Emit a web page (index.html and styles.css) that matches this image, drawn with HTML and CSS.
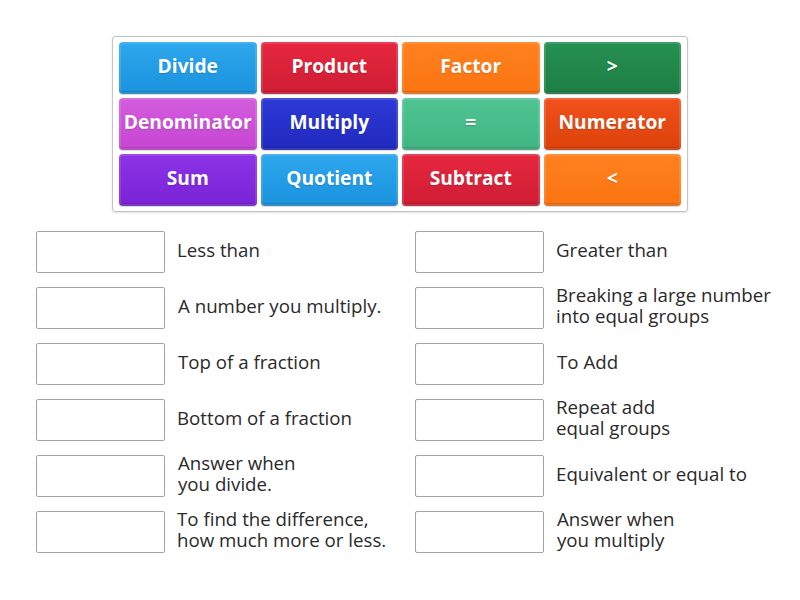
FILE: index.html
```html
<!DOCTYPE html>
<html>
<head>
<meta charset="utf-8">
<link rel="stylesheet" href="styles.css">
</head>
<body>
<div class="page">
  <div class="bank">
    <div class="tile c-blue">Divide</div>
    <div class="tile c-red">Product</div>
    <div class="tile c-orange">Factor</div>
    <div class="tile c-green">&gt;</div>
    <div class="tile c-pink">Denominator</div>
    <div class="tile c-navy">Multiply</div>
    <div class="tile c-mint">=</div>
    <div class="tile c-vermil">Numerator</div>
    <div class="tile c-purple">Sum</div>
    <div class="tile c-blue">Quotient</div>
    <div class="tile c-red">Subtract</div>
    <div class="tile c-orange">&lt;</div>
  </div>
  <div class="pairs">
    <div class="pair"><div class="slot"></div><div class="label">Less than</div></div>
    <div class="pair"><div class="slot"></div><div class="label">Greater than</div></div>
    <div class="pair"><div class="slot"></div><div class="label shift">A number you multiply.</div></div>
    <div class="pair"><div class="slot"></div><div class="label">Breaking a large number<br>into equal groups</div></div>
    <div class="pair"><div class="slot"></div><div class="label shift">Top of a fraction</div></div>
    <div class="pair"><div class="slot"></div><div class="label shift">To Add</div></div>
    <div class="pair"><div class="slot"></div><div class="label">Bottom of a fraction</div></div>
    <div class="pair"><div class="slot"></div><div class="label">Repeat add<br>equal groups</div></div>
    <div class="pair"><div class="slot"></div><div class="label shift">Answer when<br>you divide.</div></div>
    <div class="pair"><div class="slot"></div><div class="label">Equivalent or equal to</div></div>
    <div class="pair"><div class="slot"></div><div class="label">To find the difference,<br>how much more or less.</div></div>
    <div class="pair"><div class="slot"></div><div class="label shift">Answer when<br>you multiply</div></div>
  </div>
</div>
</body>
</html>
```

FILE: styles.css
```css
html, body {
  margin: 0;
  padding: 0;
  background: #ffffff;
}
body {
  font-family: "Open Sans", "Liberation Sans", sans-serif;
  width: 800px;
  height: 600px;
  overflow: hidden;
}
.page {
  padding-top: 36px;
}
.bank {
  width: 562px;
  margin: 0 auto;
  border: 1px solid #c4c4c4;
  border-radius: 3px;
  padding: 5px 6px 5px 6px;
  display: grid;
  grid-template-columns: repeat(4, 137.5px);
  grid-auto-rows: 52px;
  gap: 4px;
  box-shadow: 0 1px 2px rgba(0,0,0,0.12);
}
.tile {
  border-radius: 4px;
  color: #ffffff;
  font-weight: 700;
  font-size: 19.2px;
  display: flex;
  align-items: center;
  justify-content: center;
  padding-bottom: 6px;
  box-sizing: border-box;
  white-space: nowrap;
  text-shadow: 0 1px 1px rgba(0,0,0,0.15);
  box-shadow: inset 0 0 0 2px rgba(255,255,255,0.12), inset 0 -3px 0 rgba(0,0,0,0.12), 0 1px 1px rgba(0,0,0,0.15);
}
.c-blue   { background: linear-gradient(#2ea7ee, #1a92dd); }
.c-red    { background: linear-gradient(#e6283f, #cf1c33); }
.c-orange { background: linear-gradient(#ff8120, #fb7410); }
.c-green  { background: linear-gradient(#259150, #1d7e44); }
.c-pink   { background: linear-gradient(#d35cdd, #c745d2); }
.c-navy   { background: linear-gradient(#2d3ad6, #2029bf); }
.c-mint   { background: linear-gradient(#50c593, #40b481); }
.c-vermil { background: linear-gradient(#f2501a, #dc420b); }
.c-purple { background: linear-gradient(#8c33e6, #7a22d6); }

.pairs {
  margin: 19px 0 0 36px;
  display: grid;
  grid-template-columns: 379px 379px;
  grid-auto-rows: 42px;
  row-gap: 14px;
}
.pair {
  display: flex;
  align-items: center;
}
.slot {
  width: 129px;
  height: 42px;
  box-sizing: border-box;
  border: 1px solid #a3a3a3;
  border-radius: 2px;
  flex: none;
}
.label {
  margin-left: 12px;
  font-size: 18.7px;
  line-height: 21px;
  color: #2a2a2a;
  padding-bottom: 6px;
}
.label.shift {
  margin-left: 13px;
}
```
